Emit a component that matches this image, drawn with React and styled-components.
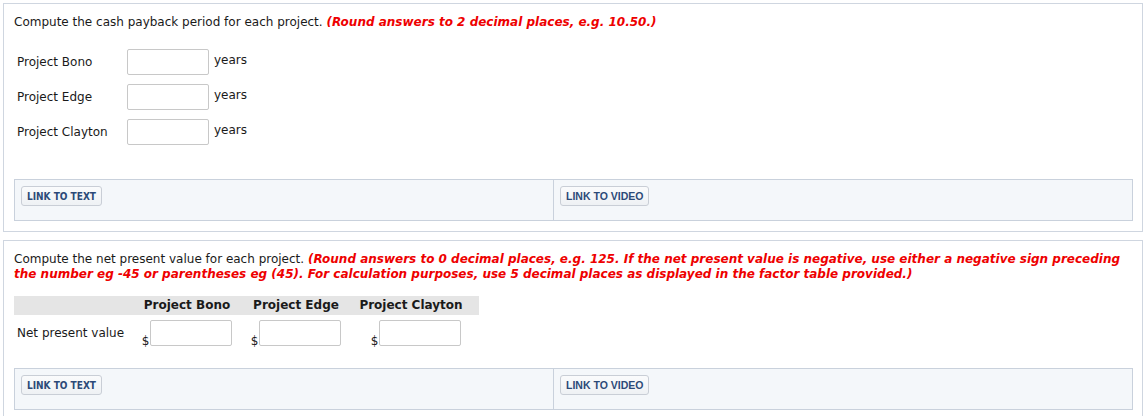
import React from "react";
import styled, { createGlobalStyle } from "styled-components";

const GlobalStyle = createGlobalStyle`
  body {
    margin: 0;
    background: #ffffff;
    font-family: "DejaVu Sans", Verdana, sans-serif;
    font-size: 12px;
    color: #1a1a1a;
  }
`;

const Page = styled.div`
  padding: 3px 3px 0 3px;
  display: flex;
  flex-direction: column;
  gap: 8px;
`;

const Panel = styled.div`
  border: 1px solid #cfd6e0;
  padding: 11px 9px 10px 10px;
  background: #fff;
`;

const Question = styled.p`
  margin: 0;
  line-height: 15px;
`;

const Hint = styled.span`
  color: #ee0000;
  font-weight: bold;
  font-style: italic;
`;

const PaybackGrid = styled.div`
  display: grid;
  grid-template-columns: 113px 82px auto;
  row-gap: 9px;
  margin-top: 19px;
  align-items: start;
`;

const RowLabel = styled.div`
  padding-left: 3px;
  height: 26px;
  display: flex;
  align-items: center;
`;

const Field = styled.input`
  box-sizing: border-box;
  width: 82px;
  height: 26px;
  border: 1px solid #c8c8c8;
  border-radius: 2px;
  background: #fff;
  margin: 0;
`;

const Unit = styled.span`
  padding-left: 5px;
  padding-top: 4px;
`;

const LinkBar = styled.div`
  display: grid;
  grid-template-columns: 538px 1fr;
  border: 1px solid #c9d1dc;
  background: #f4f7fa;
  margin-top: ${(p) => p.$top}px;
  height: 42px;
  box-sizing: border-box;
`;

const LinkCell = styled.div`
  padding: 6px 6px;
  & + & {
    border-left: 1px solid #c9d1dc;
  }
`;

const LinkButton = styled.button`
  font-family: ${(p) =>
    p.$narrow ? '"Liberation Sans", Arial' : '"DejaVu Sans Condensed", "DejaVu Sans"'}, sans-serif;
  font-size: ${(p) => (p.$narrow ? 10.5 : 10)}px;
  font-weight: bold;
  color: #2c4a78;
  background: linear-gradient(#fafbfc, #eef1f4);
  border: 1px solid #c9ced6;
  border-radius: 3px;
  height: 20px;
  padding: 0 5px;
  cursor: pointer;
`;

const NpvTable = styled.div`
  display: grid;
  grid-template-columns: 121px 104px 114px 126px;
  margin-top: 14px;
  width: 465px;
`;

const HeadCell = styled.div`
  background: #e5e5e5;
  height: 19px;
  line-height: 19px;
  font-weight: bold;
  font-size: 12px;
  text-align: center;
  white-space: nowrap;
  padding-right: ${(p) => p.$pr || 0}px;
`;

const NpvLabel = styled.div`
  padding-left: 3px;
  margin-top: 5px;
  height: 26px;
  display: flex;
  align-items: center;
`;

const MoneyCell = styled.div`
  margin-top: 5px;
  display: flex;
  justify-content: center;
  align-items: flex-end;
`;

const Dollar = styled.span`
  margin-right: 1px;
  line-height: 12px;
  margin-bottom: -1px;
`;

const Links = ({ top }) => (
  <LinkBar $top={top}>
    <LinkCell>
      <LinkButton>LINK TO TEXT</LinkButton>
    </LinkCell>
    <LinkCell>
      <LinkButton $narrow>LINK TO VIDEO</LinkButton>
    </LinkCell>
  </LinkBar>
);

const projects = ["Project Bono", "Project Edge", "Project Clayton"];

export default function App() {
  return (
    <Page>
      <GlobalStyle />
      <Panel>
        <Question>
          Compute the cash payback period for each project.{" "}
          <Hint>(Round answers to 2 decimal places, e.g. 10.50.)</Hint>
        </Question>
        <PaybackGrid>
          {projects.map((p) => (
            <React.Fragment key={p}>
              <RowLabel>{p}</RowLabel>
              <Field type="text" />
              <Unit>years</Unit>
            </React.Fragment>
          ))}
        </PaybackGrid>
        <Links top={34} />
      </Panel>
      <Panel>
        <Question>
          Compute the net present value for each project.{" "}
          <Hint>
            (Round answers to 0 decimal places, e.g. 125. If the net present value is negative, use either a
            negative sign preceding the number eg -45 or parentheses eg (45). For calculation purposes, use 5
            decimal places as displayed in the factor table provided.)
          </Hint>
        </Question>
        <NpvTable>
          <HeadCell />
          {projects.map((p, i) => (
            <HeadCell key={p} $pr={i === 2 ? 10 : 0}>
              {p}
            </HeadCell>
          ))}
          <NpvLabel>Net present value</NpvLabel>
          {projects.map((p) => (
            <MoneyCell key={p}>
              <Dollar>$</Dollar>
              <Field type="text" />
            </MoneyCell>
          ))}
        </NpvTable>
        <Links top={22} />
      </Panel>
    </Page>
  );
}
